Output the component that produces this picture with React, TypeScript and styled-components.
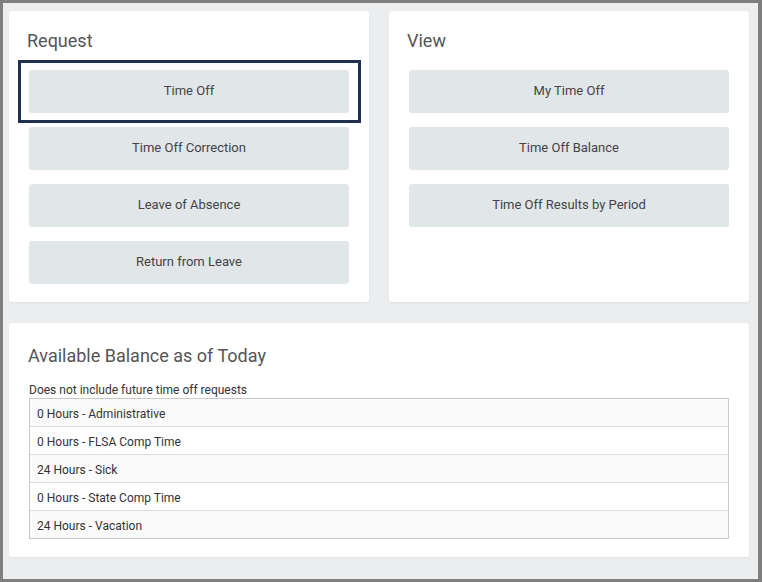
import React from "react";
import styled, { createGlobalStyle } from "styled-components";

const GlobalStyle = createGlobalStyle`
  html, body {
    margin: 0;
    padding: 0;
  }
  body {
    font-family: Roboto, "Liberation Sans", Arial, sans-serif;
    color: #333333;
  }
`;

const Frame = styled.div`
  box-sizing: border-box;
  width: 762px;
  height: 582px;
  border-style: solid;
  border-color: #7f7f7f;
  border-width: 3px 4px 3px 3px;
  background: #ebedef;
  padding: 8px 9px 0 6px;
  display: flex;
  flex-direction: column;
  gap: 21px;
`;

const TopRow = styled.div`
  display: grid;
  grid-template-columns: 360px 360px;
  gap: 20px;
`;

const Card = styled.section`
  background: #ffffff;
  border-radius: 3px;
  box-shadow: 0 1px 2px rgba(0, 0, 0, 0.05);
  padding: 18px 20px;
`;

const Title = styled.h2`
  margin: 0 0 17px -2px;
  font-size: 18px;
  line-height: 24px;
  font-weight: 400;
  color: #555555;
`;

const ButtonList = styled.div`
  display: flex;
  flex-direction: column;
  gap: 14px;
`;

const ActionButton = styled.button<{ $focused?: boolean }>`
  position: relative;
  height: 43px;
  width: 100%;
  padding: 0 0 3px;
  border: none;
  border-radius: 3px;
  background: #e1e6e9;
  font-family: Roboto, "Liberation Sans", Arial, sans-serif;
  font-size: 13px;
  color: #444444;
  cursor: pointer;
  &::before {
    content: "";
    display: ${(p) => (p.$focused ? "block" : "none")};
    position: absolute;
    top: -10px;
    bottom: -10px;
    left: -11px;
    right: -12px;
    border: 3px solid #1e2f52;
    pointer-events: none;
  }
`;

const BalanceCard = styled(Card)`
  padding-top: 21px;
  padding-bottom: 18px;
`;

const BalanceTitle = styled(Title)`
  margin: 0 0 15px -1px;
`;

const Note = styled.div`
  font-size: 12px;
  line-height: 14px;
  color: #333333;
  margin-bottom: 1px;
`;

const Table = styled.div`
  border: 1px solid #c8c8c8;
`;

const Row = styled.div<{ $shaded: boolean }>`
  box-sizing: border-box;
  height: 27px;
  display: flex;
  align-items: center;
  padding: 2px 0 0 7px;
  font-size: 12px;
  color: #333333;
  background: ${(p) => (p.$shaded ? "#fafafa" : "#ffffff")};
  & + & {
    height: 28px;
    border-top: 1px solid #dcdcdc;
  }
`;

const requestItems = [
  "Time Off",
  "Time Off Correction",
  "Leave of Absence",
  "Return from Leave",
];

const viewItems = ["My Time Off", "Time Off Balance", "Time Off Results by Period"];

const balances = [
  "0 Hours - Administrative",
  "0 Hours - FLSA Comp Time",
  "24 Hours - Sick",
  "0 Hours - State Comp Time",
  "24 Hours - Vacation",
];

export default function App() {
  return (
    <>
      <GlobalStyle />
      <Frame>
        <TopRow>
          <Card>
            <Title>Request</Title>
            <ButtonList>
              {requestItems.map((label, i) => (
                <ActionButton key={label} $focused={i === 0}>
                  {label}
                </ActionButton>
              ))}
            </ButtonList>
          </Card>
          <Card>
            <Title>View</Title>
            <ButtonList>
              {viewItems.map((label) => (
                <ActionButton key={label}>{label}</ActionButton>
              ))}
            </ButtonList>
          </Card>
        </TopRow>
        <BalanceCard>
          <BalanceTitle>Available Balance as of Today</BalanceTitle>
          <Note>Does not include future time off requests</Note>
          <Table>
            {balances.map((b, i) => (
              <Row key={b} $shaded={i % 2 === 0}>
                {b}
              </Row>
            ))}
          </Table>
        </BalanceCard>
      </Frame>
    </>
  );
}
